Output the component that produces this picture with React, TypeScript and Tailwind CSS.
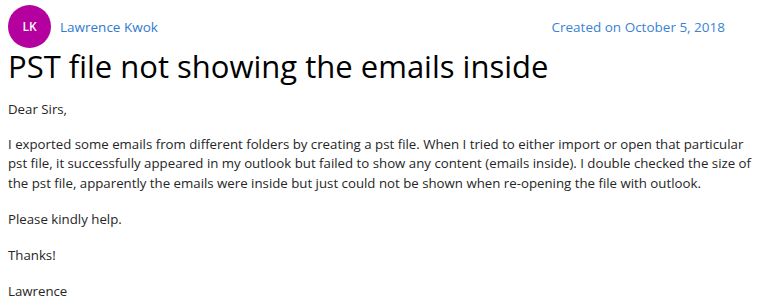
import React from 'react';

const font = { fontFamily: '"Segoe UI", "Open Sans", "Liberation Sans", sans-serif' };

export default function App() {
  return (
    <div className="h-[305px] w-[768px] overflow-hidden bg-white px-2 pt-[5px]" style={font}>
      <div className="flex items-center justify-between">
        <div className="flex items-center gap-[9px]">
          <div className="flex h-[43px] w-[43px] items-center justify-center rounded-full bg-[#b4009e] text-[12px] font-semibold text-white">
            LK
          </div>
          <span className="mt-[2px] text-[13.5px] text-[#2f7ad1]">Lawrence Kwok</span>
        </div>
        <span className="mt-[2px] pr-[35px] text-[13.5px] text-[#3b82d6]">Created on October 5, 2018</span>
      </div>
      <h1 className="mt-[-2px] text-[31px] font-medium leading-[40px] text-black">PST file not showing the emails inside</h1>
      <div className="mt-[14px] w-[745px] text-[13.25px] leading-[19.5px] text-[#262626]">
        <p>Dear Sirs,</p>
        <p className="mt-[15px]">
          I exported some emails from different folders by creating a pst file. When I tried to either import or open that particular pst file, it successfully appeared in my outlook but failed to show any content (emails inside). I double checked the size of the pst file, apparently the emails were inside but just could not be shown when re-opening the file with outlook.
        </p>
        <p className="mt-[17px]">Please kindly help.</p>
        <p className="mt-[16px]">Thanks!</p>
        <p className="mt-[16.5px]">Lawrence</p>
      </div>
    </div>
  );
}
